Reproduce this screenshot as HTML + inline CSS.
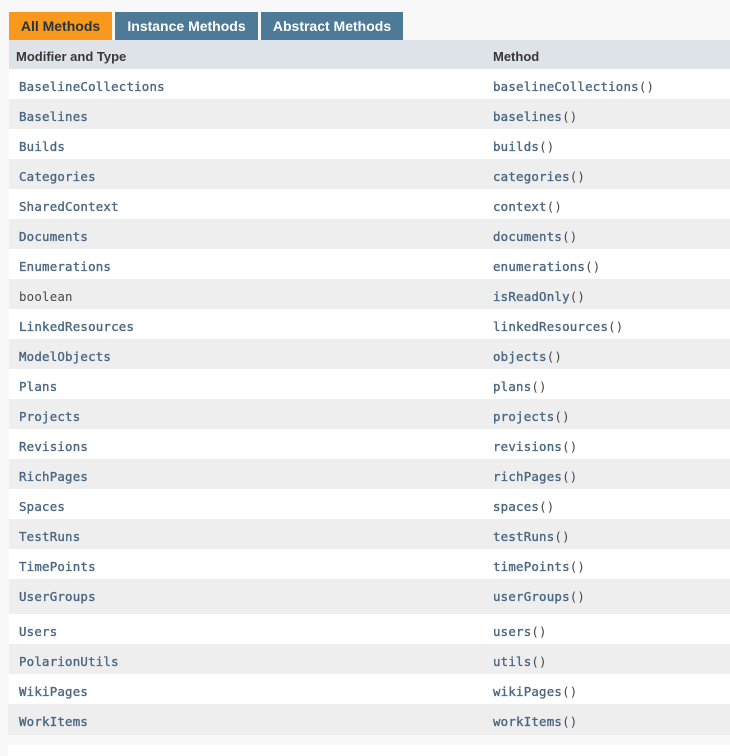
<!DOCTYPE html>
<html>
<head>
<meta charset="utf-8">
<style>
html,body{margin:0;padding:0;background:#fff;}
#p{position:relative;width:730px;height:756px;overflow:hidden;background:#f8f8f8;font-family:"Liberation Sans",sans-serif;}
.tab{position:absolute;top:12px;height:28px;line-height:28px;text-align:center;font-weight:bold;font-size:14px;color:#fff;background:#4d7a97;}
.h{position:absolute;left:9px;right:0;top:40px;height:29px;background:#dee3e9;}
.h span{position:absolute;top:0;line-height:33px;font-size:13px;font-weight:bold;color:#353833;}
.r{position:absolute;left:9px;right:0;font-family:"DejaVu Sans Mono",monospace;font-size:12.4px;letter-spacing:0.215px;color:#474747;}
.r span{position:absolute;top:0;white-space:pre;line-height:36px;}
.a{left:10px;}
.b{left:484px;}
.r b{font-weight:normal;color:#4a6782;-webkit-text-stroke:0.35px #4a6782;}
.w{background:#fff;}
.g{background:#eeeeee;}
</style>
</head>
<body>
<div id="p">
<div class="tab" style="left:9px;width:103px;background:#f8981d;color:#253441;">All Methods</div>
<div class="tab" style="left:115px;width:143px;">Instance Methods</div>
<div class="tab" style="left:261px;width:142px;">Abstract Methods</div>
<div class="h"><span style="left:7px;">Modifier and Type</span><span style="left:484px;">Method</span></div>
<div class="r w" style="top:69px;height:30px;"><span class="a"><b>BaselineCollections</b></span><span class="b"><b>baselineCollections</b>()</span></div>
<div class="r g" style="top:99px;height:30px;"><span class="a"><b>Baselines</b></span><span class="b"><b>baselines</b>()</span></div>
<div class="r w" style="top:129px;height:30px;"><span class="a"><b>Builds</b></span><span class="b"><b>builds</b>()</span></div>
<div class="r g" style="top:159px;height:30px;"><span class="a"><b>Categories</b></span><span class="b"><b>categories</b>()</span></div>
<div class="r w" style="top:189px;height:30px;"><span class="a"><b>SharedContext</b></span><span class="b"><b>context</b>()</span></div>
<div class="r g" style="top:219px;height:30px;"><span class="a"><b>Documents</b></span><span class="b"><b>documents</b>()</span></div>
<div class="r w" style="top:249px;height:30px;"><span class="a"><b>Enumerations</b></span><span class="b"><b>enumerations</b>()</span></div>
<div class="r g" style="top:279px;height:30px;"><span class="a">boolean</span><span class="b"><b>isReadOnly</b>()</span></div>
<div class="r w" style="top:309px;height:30px;"><span class="a"><b>LinkedResources</b></span><span class="b"><b>linkedResources</b>()</span></div>
<div class="r g" style="top:339px;height:30px;"><span class="a"><b>ModelObjects</b></span><span class="b"><b>objects</b>()</span></div>
<div class="r w" style="top:369px;height:30px;"><span class="a"><b>Plans</b></span><span class="b"><b>plans</b>()</span></div>
<div class="r g" style="top:399px;height:30px;"><span class="a"><b>Projects</b></span><span class="b"><b>projects</b>()</span></div>
<div class="r w" style="top:429px;height:30px;"><span class="a"><b>Revisions</b></span><span class="b"><b>revisions</b>()</span></div>
<div class="r g" style="top:459px;height:30px;"><span class="a"><b>RichPages</b></span><span class="b"><b>richPages</b>()</span></div>
<div class="r w" style="top:489px;height:30px;"><span class="a"><b>Spaces</b></span><span class="b"><b>spaces</b>()</span></div>
<div class="r g" style="top:519px;height:30px;"><span class="a"><b>TestRuns</b></span><span class="b"><b>testRuns</b>()</span></div>
<div class="r w" style="top:549px;height:30px;"><span class="a"><b>TimePoints</b></span><span class="b"><b>timePoints</b>()</span></div>
<div class="r g" style="top:579px;height:35px;"><span class="a"><b>UserGroups</b></span><span class="b"><b>userGroups</b>()</span></div>
<div class="r w" style="top:614px;height:30px;"><span class="a"><b>Users</b></span><span class="b"><b>users</b>()</span></div>
<div class="r g" style="top:644px;height:30px;"><span class="a"><b>PolarionUtils</b></span><span class="b"><b>utils</b>()</span></div>
<div class="r w" style="top:674px;height:30px;"><span class="a"><b>WikiPages</b></span><span class="b"><b>wikiPages</b>()</span></div>
<div class="r g" style="top:704px;height:31px;left:8px;"><span class="a" style="left:11px;"><b>WorkItems</b></span><span class="b" style="left:485px;"><b>workItems</b>()</span></div>
<div style="position:absolute;left:8px;right:0;top:745px;height:11px;background:#fff;"></div>
</div>
</body>
</html>
